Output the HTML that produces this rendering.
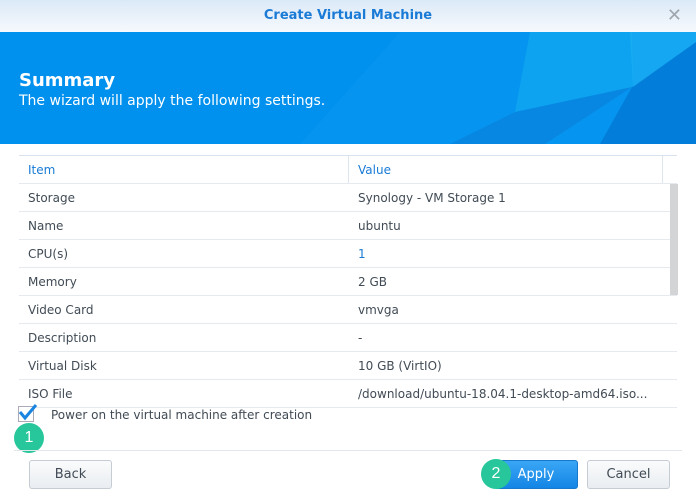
<!DOCTYPE html>
<html><head><style>
body{margin:0;width:696px;height:495px;overflow:hidden;background:#fff;font-family:"DejaVu Sans",sans-serif;position:relative}
.t{position:absolute;height:32px;top:0;left:0;right:0;background:linear-gradient(#dbe9f7,#f6f9fd);text-align:center;line-height:32px;font-size:13px;font-weight:bold;color:#1a7bd6}
.x{position:absolute;right:14px;top:0;color:#a0a6ad;font-size:18px;font-weight:normal}
.b{position:absolute;top:32px;left:0;right:0;height:112px;background:#0090ee;overflow:hidden}
.b h1{position:absolute;left:19px;top:38px;margin:0;font-size:18px;color:#fff}
.b p{position:absolute;left:19px;top:61px;margin:0;font-size:14px;color:#fff}
.tb{position:absolute;left:19px;top:155px;width:658px;border-top:1px solid #d6e2ee}
.r{height:27px;border-bottom:1px solid #e6eaee;font-size:12px;color:#414b55;position:relative;line-height:29px}
.r span{position:absolute;left:9px}.r span+span{left:339px}
.h{color:#1a7bd6}
.cb{position:absolute;left:18px;top:406px;width:14px;height:14px;border:1px solid #aab;background:#fff}
.n{position:absolute;width:30px;height:30px;border-radius:50%;background:#27c79b;color:#fff;font-size:16px;text-align:center;line-height:30px;font-family:"Liberation Sans",sans-serif}
.btn{position:absolute;top:460px;height:27px;border:1px solid #c5ccd4;border-radius:3px;background:linear-gradient(#fafbfc,#e9edf1);font-size:13px;color:#414b55;text-align:center;line-height:28px}
</style></head><body>
<div class="t">Create Virtual Machine<span class="x">✕</span></div>
<div class="b">
<svg width="696" height="112" style="position:absolute;left:0;top:0">
<polygon points="400,0 696,0 696,112 300,112" fill="#0a98f0" opacity=".5"/>
<polygon points="530,0 632,0 633,55 515,80" fill="#12aef0" opacity=".6"/>
<polygon points="632,55 696,10 696,112 600,112" fill="#0070cc" opacity=".6"/>
<polygon points="515,80 632,55 545,112 450,112" fill="#0a7fd8" opacity=".6"/>
<polygon points="630,0 696,0 696,10 633,55" fill="#20b4f4" opacity=".6"/>
</svg>
<h1>Summary</h1><p>The wizard will apply the following settings.</p></div>
<div class="tb">
<div class="r h"><span>Item</span><span>Value</span><div style="position:absolute;left:329px;top:0;height:27px;border-left:1px solid #dde5ee"></div><div style="position:absolute;left:643px;top:0;height:27px;border-left:1px solid #dde5ee"></div></div>
<div class="r"><span>Storage</span><span>Synology - VM Storage 1</span></div>
<div class="r"><span>Name</span><span>ubuntu</span></div>
<div class="r"><span>CPU(s)</span><span style="color:#1a7bd6">1</span></div>
<div class="r"><span>Memory</span><span>2 GB</span></div>
<div class="r"><span>Video Card</span><span>vmvga</span></div>
<div class="r"><span>Description</span><span>-</span></div>
<div class="r"><span>Virtual Disk</span><span>10 GB (VirtIO)</span></div>
<div class="r"><span>ISO File</span><span>/download/ubuntu-18.04.1-desktop-amd64.iso...</span></div>
</div>
<div style="position:absolute;left:670px;top:184px;width:8px;height:111px;background:#d3d4d6"></div>
<div class="cb"></div>
<svg style="position:absolute;left:17px;top:402px" width="22" height="20"><path d="M3 10 L8 16 L19 3" stroke="#1a85e0" stroke-width="3" fill="none"/></svg>
<div style="position:absolute;left:51px;top:408px;font-size:12px;color:#414b55">Power on the virtual machine after creation</div>
<div class="n" style="left:14px;top:423px">1</div>
<div style="position:absolute;left:14px;right:14px;top:450px;border-top:1px solid #e3e6ea"></div>
<div class="btn" style="left:29px;width:81px">Back</div>
<div class="btn" style="left:494px;width:82px;background:linear-gradient(#3aa6f5,#1385e5);border-color:#1679cc;color:#fff">Apply</div>
<div class="btn" style="left:587px;width:81px">Cancel</div>
<div class="n" style="left:481px;top:459px">2</div>
</body></html>
